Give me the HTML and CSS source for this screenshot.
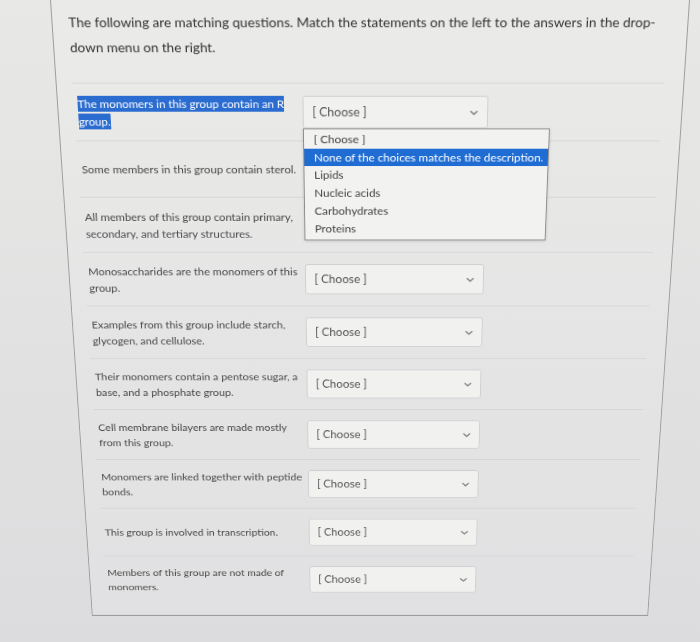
FILE: index.html
```html
<!DOCTYPE html>
<html lang="en">
<head>
  <meta charset="UTF-8" />
  <title>Matching Questions</title>
  <link rel="stylesheet" href="styles.css">
</head>
<body>
  <div class="stage">
    <div class="card">
      <p class="prompt">The following are matching questions. Match the statements on the left to the answers in the drop-down menu on the right.</p>

      <div class="rows">
        <div class="row">
          <div class="stmt"><span class="picked">The monomers in this group contain an R group.</span></div>
          <div class="pick">
            <div class="select"><span>[ Choose ]</span><svg class="chev" viewBox="0 0 10 6"><path d="M1 1l4 4 4-4"/></svg></div>
            <ul class="menu">
              <li>[ Choose ]</li>
              <li class="hot">None of the choices matches the description.</li>
              <li>Lipids</li>
              <li>Nucleic acids</li>
              <li>Carbohydrates</li>
              <li>Proteins</li>
            </ul>
          </div>
        </div>

        <!-- the next two selects sit under the open menu -->
        <div class="row">
          <div class="stmt">Some members in this group contain sterol.</div>
          <div class="pick covered">
            <div class="select"><span>[ Choose ]</span><svg class="chev" viewBox="0 0 10 6"><path d="M1 1l4 4 4-4"/></svg></div>
          </div>
        </div>

        <div class="row">
          <div class="stmt">All members of this group contain primary, secondary, and tertiary structures.</div>
          <div class="pick covered">
            <div class="select"><span>[ Choose ]</span><svg class="chev" viewBox="0 0 10 6"><path d="M1 1l4 4 4-4"/></svg></div>
          </div>
        </div>

        <div class="row">
          <div class="stmt">Monosaccharides are the monomers of this group.</div>
          <div class="pick">
            <div class="select"><span>[ Choose ]</span><svg class="chev" viewBox="0 0 10 6"><path d="M1 1l4 4 4-4"/></svg></div>
          </div>
        </div>

        <div class="row">
          <div class="stmt">Examples from this group include starch, glycogen, and cellulose.</div>
          <div class="pick">
            <div class="select"><span>[ Choose ]</span><svg class="chev" viewBox="0 0 10 6"><path d="M1 1l4 4 4-4"/></svg></div>
          </div>
        </div>

        <div class="row">
          <div class="stmt">Their monomers contain a pentose sugar, a base, and a phosphate group.</div>
          <div class="pick">
            <div class="select"><span>[ Choose ]</span><svg class="chev" viewBox="0 0 10 6"><path d="M1 1l4 4 4-4"/></svg></div>
          </div>
        </div>

        <div class="row">
          <div class="stmt">Cell membrane bilayers are made mostly from this group.</div>
          <div class="pick">
            <div class="select"><span>[ Choose ]</span><svg class="chev" viewBox="0 0 10 6"><path d="M1 1l4 4 4-4"/></svg></div>
          </div>
        </div>

        <div class="row">
          <div class="stmt">Monomers are linked together with peptide bonds.</div>
          <div class="pick">
            <div class="select"><span>[ Choose ]</span><svg class="chev" viewBox="0 0 10 6"><path d="M1 1l4 4 4-4"/></svg></div>
          </div>
        </div>

        <div class="row">
          <div class="stmt">This group is involved in transcription.</div>
          <div class="pick">
            <div class="select"><span>[ Choose ]</span><svg class="chev" viewBox="0 0 10 6"><path d="M1 1l4 4 4-4"/></svg></div>
          </div>
        </div>

        <div class="row">
          <div class="stmt">Members of this group are not made of monomers.</div>
          <div class="pick">
            <div class="select"><span>[ Choose ]</span><svg class="chev" viewBox="0 0 10 6"><path d="M1 1l4 4 4-4"/></svg></div>
          </div>
        </div>
      </div>
    </div>
  </div>
</body>
</html>
```

FILE: styles.css
```css
html, body {
  height: 100%;
}

body {
  margin: 0;
  overflow: hidden;
  font-family: Lato, 'Open Sans', sans-serif;
  color: #3a3a3a;
  background: linear-gradient(#e8e8e6, #dcdcde);
}

/* the screen was photographed at a slight angle */
.stage {
  width: 700px;
  transform-origin: 370px 0;
  transform: perspective(1000px) rotateX(-12deg);
}

.card {
  margin-left: 50px;
  width: 622px;
  padding: 10px 0 17px 16px;
  border: 1px solid #9c9d9c;
  border-top: none;
  background: rgba(255, 255, 255, 0.12);
}

.prompt {
  margin: 0 0 24px;
  width: 602px;
  font-size: 13.6px;
  line-height: 26px;
  color: #333;
}

.rows {
  width: 602px;
  border-top: 1px solid #d3d5d5;
}

.row {
  display: flex;
  align-items: center;
  height: 61px;
  padding-left: 4px;
  border-bottom: 1px solid #d3d5d5;
}
.row:last-child {
  border-bottom: none;
}

.stmt {
  flex: 0 0 228px;
  margin-right: 2px;
  font-size: 11.75px;
  line-height: 19px;
  color: #474747;
}

.picked {
  background: #2b6cd0;
  color: #fff;
  padding: 1px 0;
}

.pick {
  position: relative;
}
.pick.covered {
  visibility: hidden;
}

.select {
  display: flex;
  align-items: center;
  justify-content: space-between;
  box-sizing: border-box;
  width: 190px;
  height: 35px;
  padding: 0 9px;
  border: 1px solid #cdd0d1;
  border-radius: 3px;
  background: #f1f1f0;
  font-size: 12.5px;
  color: #555;
}

.chev {
  width: 9px;
  height: 6px;
  fill: none;
  stroke: #777;
  stroke-width: 1.4;
}

.menu {
  position: absolute;
  top: 35px;
  left: 0;
  z-index: 2;
  width: 252px;
  margin: 0;
  padding: 1px 0 3px;
  list-style: none;
  border: 1px solid #8c8d8e;
  background: #f2f2f1;
  box-shadow: 0 1px 3px rgba(0, 0, 0, 0.15);
  font-size: 12px;
  line-height: 19.7px;
  color: #3f3f3f;
}
.menu li {
  padding-left: 10px;
  white-space: nowrap;
}
.menu li.hot {
  background: #1f6cd3;
  color: #fff;
}
```
